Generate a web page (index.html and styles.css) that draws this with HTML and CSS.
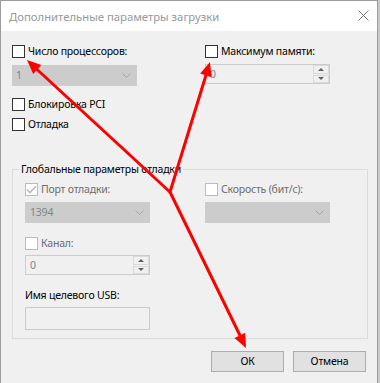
FILE: index.html
```html
<!DOCTYPE html>
<html lang="ru">
<head>
<meta charset="utf-8">
<title>Дополнительные параметры загрузки</title>
<link rel="stylesheet" href="styles.css">
</head>
<body>
<div class="window">
  <div class="titlebar">
    <span class="title">Дополнительные параметры загрузки</span>
    <svg class="close" width="11" height="11" viewBox="0 0 11 11"><path d="M0.5 0.5 L10.5 10.5 M10.5 0.5 L0.5 10.5" stroke="#7a7a7a" stroke-width="1" fill="none"/></svg>
  </div>
  <div class="content">
    <div class="top">
      <div class="col-left">
        <div class="check"><span class="box"></span><span>Число процессоров:</span></div>
        <div class="combo combo-top"><span class="val">1</span><svg class="chev" width="9" height="5" viewBox="0 0 9 5"><path d="M0.5 0.5 L4.5 4.5 L8.5 0.5" stroke="#a6a6a6" fill="none"/></svg></div>
        <div class="check pci"><span class="box"></span><span>Блокировка PCI</span></div>
        <div class="check dbg"><span class="box"></span><span>Отладка</span></div>
      </div>
      <div class="col-right">
        <div class="check"><span class="box"></span><span>Максимум памяти:</span></div>
        <div class="spin spin-top"><span class="val">0</span><div class="btns"><span class="sbtn"><span class="up"></span></span><span class="sbtn"><span class="down"></span></span></div></div>
      </div>
    </div>
    <div class="group">
      <div class="legend-row"><span class="legend">Глобальные параметры отладки</span></div>
      <div class="grow">
        <div class="gcol-left">
          <div class="check disabled port"><span class="box"><svg width="11" height="11" viewBox="0 0 11 11"><path d="M1 5.5 L4 8.5 L10 2.2" stroke="#b9b9b9" stroke-width="1.6" fill="none"/></svg></span><span>Порт отладки:</span></div>
          <div class="combo combo-g"><span class="val">1394</span><svg class="chev" width="9" height="5" viewBox="0 0 9 5"><path d="M0.5 0.5 L4.5 4.5 L8.5 0.5" stroke="#a6a6a6" fill="none"/></svg></div>
          <div class="check disabled chan"><span class="box"></span><span>Канал:</span></div>
          <div class="spin spin-g"><span class="val">0</span><div class="btns"><span class="sbtn"><span class="up"></span></span><span class="sbtn"><span class="down"></span></span></div></div>
          <div class="usb-label">Имя целевого USB:</div>
          <div class="textbox"></div>
        </div>
        <div class="gcol-right">
          <div class="check disabled port"><span class="box"></span><span>Скорость (бит/с):</span></div>
          <div class="combo combo-g"><span class="val"></span><svg class="chev" width="9" height="5" viewBox="0 0 9 5"><path d="M0.5 0.5 L4.5 4.5 L8.5 0.5" stroke="#a6a6a6" fill="none"/></svg></div>
        </div>
      </div>
    </div>
    <div class="buttons">
      <button class="btn">ОК</button>
      <button class="btn">Отмена</button>
    </div>
  </div>
  <svg class="arrows" width="380" height="383" viewBox="0 0 380 383">
    <g stroke="#ff0000" stroke-width="3" stroke-linecap="round" fill="none">
      <line x1="170" y1="192" x2="36" y2="68.5"/>
      <line x1="170" y1="192" x2="206.5" y2="73.5"/>
      <line x1="170" y1="192" x2="240.5" y2="336.5"/>
    </g>
    <g fill="#ff0000">
      <polygon points="27,60 41.4,65.1 33.2,73.9"/>
      <polygon points="210,62 211.6,77.2 200.2,73.6"/>
      <polygon points="246,348 234.5,338 245.3,332.8"/>
    </g>
  </svg>
</div>
</body>
</html>
```
FILE: styles.css
```css
html, body {
  margin: 0;
  padding: 0;
}
body {
  width: 380px;
  height: 383px;
  overflow: hidden;
  background: #c9c9c9;
  font-family: "Noto Sans", "Open Sans", sans-serif;
  font-size: 10.5px;
  letter-spacing: -0.2px;
  color: #000;
}
.window {
  position: relative;
  width: 376px;
  height: 382px;
  border: 1px solid #9c9c9c;
  border-bottom: none;
  background: #f0f0f0;
}
.titlebar {
  height: 30px;
  background: #fff;
  display: flex;
  align-items: center;
  padding: 0 8px 0 8px;
}
.title {
  font-size: 11.3px;
  letter-spacing: 0;
  color: #999;
  flex: 1;
  white-space: nowrap;
}
.close {
  display: block;
  margin-top: -1px;
}
.content {
  padding: 14px 9px 0 11px;
}
.top {
  display: flex;
}
.col-left {
  width: 193px;
}
.col-right {
  flex: 1;
}
.check {
  display: flex;
  align-items: center;
  height: 13px;
  gap: 3px;
  white-space: nowrap;
  line-height: 15px;
}
.box {
  width: 13px;
  height: 13px;
  box-sizing: border-box;
  border: 1px solid #333;
  background: #fff;
  flex: none;
  display: flex;
  align-items: center;
  justify-content: center;
}
.box svg {
  display: block;
}
.check.disabled {
  color: #6d6d6d;
}
.check.disabled .box {
  border-color: #bcbcbc;
}
.combo {
  width: 125px;
  height: 21px;
  box-sizing: border-box;
  background: #cccccc;
  border: 1px solid #cccccc;
  display: flex;
  align-items: center;
  color: #838383;
}
.combo .val {
  flex: 1;
  padding-left: 3px;
  line-height: 15px;
}
.combo .chev {
  display: block;
  margin-right: 5px;
}
.combo-top {
  margin-top: 7px;
}
.pci {
  margin-top: 12px;
}
.dbg {
  margin-top: 7px;
}
.spin {
  width: 125px;
  height: 20px;
  box-sizing: border-box;
  border: 1px solid #cccccc;
  background: #f0f0f0;
  display: flex;
  color: #838383;
}
.spin .val {
  flex: 1;
  padding-left: 4px;
  line-height: 18px;
}
.spin .btns {
  width: 16px;
  display: flex;
  flex-direction: column;
  gap: 1px;
}
.sbtn {
  flex: 1;
  border: 1px solid #d9d9d9;
  background: #f0f0f0;
  display: flex;
  align-items: center;
  justify-content: center;
}
.up {
  width: 0;
  height: 0;
  border-left: 3px solid transparent;
  border-right: 3px solid transparent;
  border-bottom: 3px solid #606060;
}
.down {
  width: 0;
  height: 0;
  border-left: 3px solid transparent;
  border-right: 3px solid transparent;
  border-top: 3px solid #606060;
}
.spin-top {
  margin-top: 6px;
}
.group {
  margin-top: 38px;
  border: 1px solid #dcdcdc;
  padding: 0 0 8px 12px;
}
.legend-row {
  height: 15px;
  margin-top: -8px;
  line-height: 15px;
}
.legend {
  display: inline-block;
  margin-left: -6px;
  padding: 0 2px;
  background: #f0f0f0;
  white-space: nowrap;
}
.grow {
  display: flex;
}
.gcol-left {
  width: 180px;
}
.gcol-right {
  flex: 1;
}
.port {
  margin-top: 6px;
}
.combo-g {
  margin-top: 6px;
}
.combo-g .val {
  padding-left: 4px;
}
.chan {
  margin-top: 14px;
}
.spin-g {
  margin-top: 5px;
}
.usb-label {
  margin-top: 13px;
  line-height: 15px;
  white-space: nowrap;
}
.textbox {
  margin-top: 4px;
  width: 125px;
  height: 23px;
  box-sizing: border-box;
  border: 1px solid #cccccc;
  background: #f0f0f0;
}
.buttons {
  display: flex;
  justify-content: flex-end;
  gap: 9px;
  margin-top: 12px;
  margin-right: 2px;
}
.btn {
  width: 73px;
  height: 21px;
  box-sizing: border-box;
  border: 1px solid #adadad;
  background: #e1e1e1;
  font-family: "Noto Sans", "Open Sans", sans-serif;
  font-size: 10.5px;
  letter-spacing: -0.2px;
  color: #000;
  padding: 0;
  margin: 0;
  line-height: 15px;
}
.arrows {
  position: absolute;
  left: -1px;
  top: -1px;
  pointer-events: none;
}
```
